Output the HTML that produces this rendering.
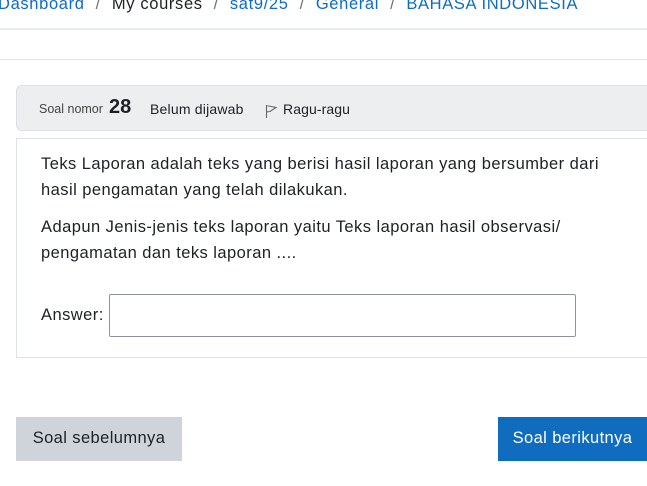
<!DOCTYPE html>
<html><head><style>
body{margin:0;width:647px;height:486px;overflow:hidden;background:#fff;font-family:"Liberation Sans",sans-serif;color:#1d2125;position:relative}
.a{position:absolute;white-space:nowrap}
.bc{top:-5px;left:-2px;font-size:16.5px;color:#0f6cbf;letter-spacing:0.65px}
.bc span.s{color:#6a737b;margin:0 11px}
.bc .k{color:#1d2125}
.l1{top:28px;left:0;width:647px;height:2px;background:#e9ecef}
.l2{top:59px;left:0;width:647px;height:1px;background:#dee2e6}
.info{top:85px;left:16px;width:640px;height:46px;background:#eceeef;border:1px solid #dcdfe3;border-radius:6px;box-sizing:border-box}
.q{top:138px;left:16px;width:640px;height:220px;border:1px solid #dee2e6;box-sizing:border-box}
.t{font-size:16.5px;line-height:26px;letter-spacing:0.45px}
.inp{top:294px;left:109px;width:467px;height:43px;border:1px solid #8f959e;box-sizing:border-box;border-radius:2px}
.b1{top:417px;left:16px;width:166px;height:44px;background:#ced4da;font-size:16.5px;line-height:42px;text-align:center;letter-spacing:0.4px}
.b2{top:417px;left:498px;width:149px;height:44px;background:#0f6cbf;color:#fff;font-size:16.5px;line-height:42px;text-align:center;letter-spacing:0.4px}
</style></head><body>
<div class="a bc">Dashboard<span class="s">/</span><span class="k">My courses</span><span class="s">/</span>sat9/25<span class="s">/</span>General<span class="s">/</span>BAHASA INDONESIA</div>
<div class="a l1"></div><div class="a l2"></div>
<div class="a info"></div>
<div class="a" style="top:102px;left:39px;font-size:12.5px;color:#444">Soal nomor</div>
<div class="a" style="top:96px;left:109px;font-size:20px;font-weight:bold">28</div>
<div class="a" style="top:101px;left:150px;font-size:14px;letter-spacing:0.2px">Belum dijawab</div>
<svg class="a" style="top:104px;left:265px" width="12" height="14" viewBox="0 0 12 14"><path d="M1.5 1v13M1.5 1.5L11 3.5 5 7.5 1.5 8" fill="none" stroke="#666" stroke-width="1.1"/></svg>
<div class="a" style="top:101px;left:283px;font-size:14px;letter-spacing:0.1px">Ragu-ragu</div>
<div class="a q"></div>
<div class="a t" style="top:151px;left:41px">Teks Laporan adalah teks yang berisi hasil laporan yang bersumber dari<br>hasil pengamatan yang telah dilakukan.</div>
<div class="a t" style="top:214px;left:41px">Adapun Jenis-jenis teks laporan yaitu Teks laporan hasil observasi/<br>pengamatan dan teks laporan ....</div>
<div class="a t" style="top:302px;left:41px">Answer:</div>
<div class="a inp"></div>
<div class="a b1">Soal sebelumnya</div>
<div class="a b2">Soal berikutnya</div>
</body></html>
